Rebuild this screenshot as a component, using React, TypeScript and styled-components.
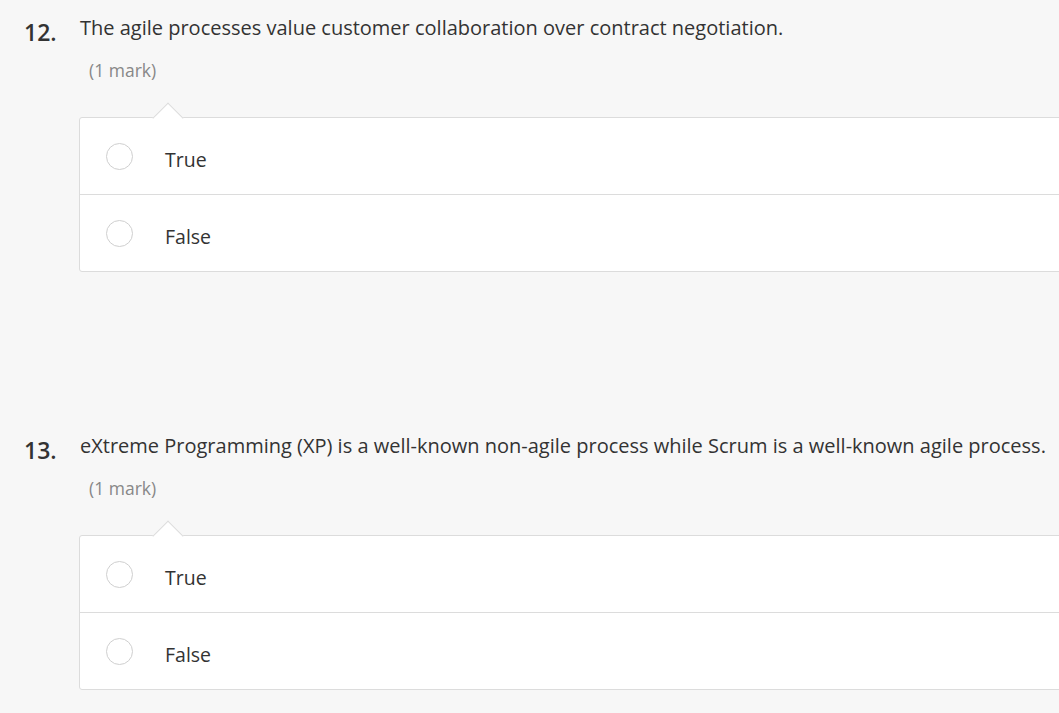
import React from "react";
import styled, { createGlobalStyle } from "styled-components";

const Global = createGlobalStyle`
  html, body { margin: 0; padding: 0; background: #f7f7f7; overflow: hidden; }
  body { font-family: "Open Sans", "Noto Sans", sans-serif; color: #333; }
`;

const Page = styled.div`
  padding: 14px 0 0 24px;
  display: flex;
  flex-direction: column;
  gap: 160px;
`;

const Question = styled.section`
  display: flex;
  flex-direction: column;
`;

const Header = styled.div`
  display: flex;
  align-items: flex-start;
  height: 28px;
`;

const Number = styled.div`
  width: 56px;
  flex: none;
  font-size: 23px;
  font-weight: 600;
  line-height: 28px;
  margin-top: 4px;
  color: #333;
`;

const Prompt = styled.div`
  font-size: 20px;
  line-height: 28px;
  color: #333;
  white-space: nowrap;
`;

const Mark = styled.div`
  margin: 17px 0 0 65px;
  font-size: 17.5px;
  line-height: 22px;
  color: #888;
`;

const Card = styled.div`
  position: relative;
  margin: 36px -40px 0 55px;
  background: #fff;
  border: 1px solid #dcdcdc;
  border-radius: 3px;
`;

const Caret = styled.div`
  position: absolute;
  left: 77px;
  top: -11px;
  width: 21px;
  height: 21px;
  background: #fff;
  border-left: 1px solid #dcdcdc;
  border-top: 1px solid #dcdcdc;
  transform: rotate(45deg);
`;

const Option = styled.label<{ $first?: boolean }>`
  position: relative;
  display: flex;
  align-items: center;
  height: 76px;
  border-top: ${(p) => (p.$first ? "none" : "1px solid #dcdcdc")};
  cursor: pointer;
`;

const Radio = styled.span`
  flex: none;
  box-sizing: border-box;
  width: 27px;
  height: 27px;
  margin-left: 26px;
  border: 1px solid #cfcfcf;
  border-radius: 50%;
  background: #fff;
`;

const OptionText = styled.span`
  margin-left: 32px;
  padding-top: 7px;
  font-size: 19.5px;
  line-height: 26px;
  color: #333;
`;

type Q = { n: string; text: string };

const questions: Q[] = [
  { n: "12.", text: "The agile processes value customer collaboration over contract negotiation." },
  {
    n: "13.",
    text: "eXtreme Programming (XP) is a well-known non-agile process while Scrum is a well-known agile process.",
  },
];

export default function App() {
  return (
    <>
      <Global />
      <Page>
        {questions.map((q) => (
          <Question key={q.n}>
            <Header>
              <Number>{q.n}</Number>
              <Prompt>{q.text}</Prompt>
            </Header>
            <Mark>(1 mark)</Mark>
            <Card>
              <Caret />
              <Option $first>
                <Radio />
                <OptionText>True</OptionText>
              </Option>
              <Option>
                <Radio />
                <OptionText>False</OptionText>
              </Option>
            </Card>
          </Question>
        ))}
      </Page>
    </>
  );
}
